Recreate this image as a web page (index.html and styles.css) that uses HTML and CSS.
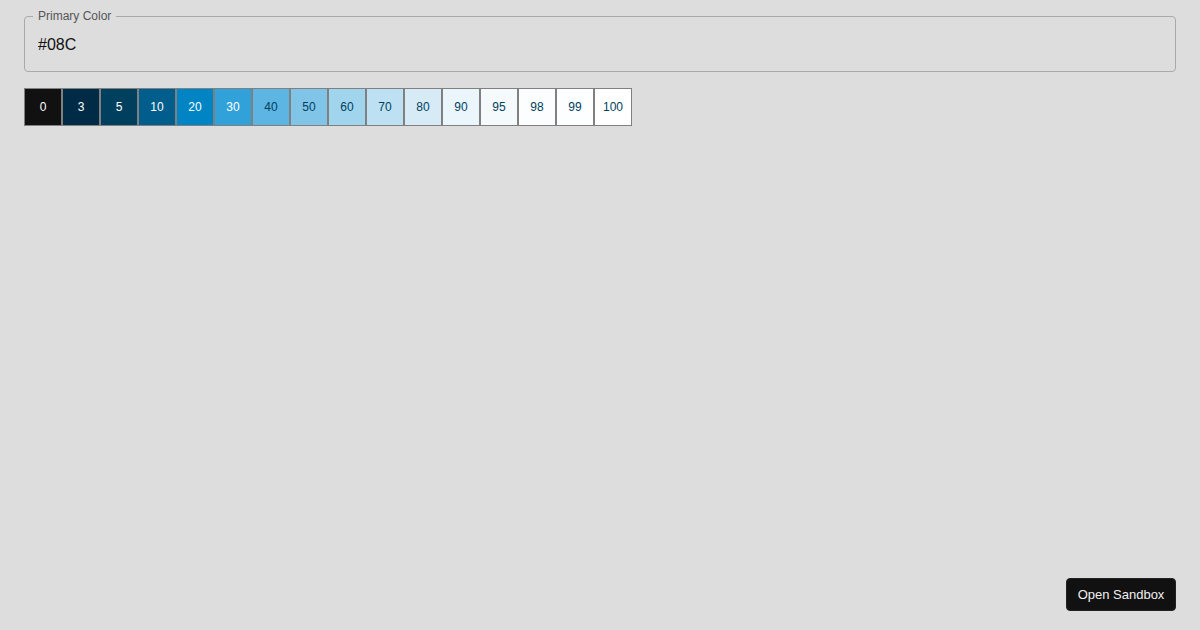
FILE: index.html
```html
<!DOCTYPE html>
<html lang="en">
<head>
    <meta charset="UTF-8">
    <meta name="viewport" content="width=device-width, initial-scale=1.0">
    <title>Palette</title>
    <link rel="stylesheet" href="styles.css">
</head>
<body>
    <div class="page">
        <fieldset class="field">
            <legend>Primary Color</legend>
            <input class="field-input" type="text" value="#08C">
        </fieldset>

        <div class="tones">
            <div class="tone light" style="background-color: #111111">0</div>
            <div class="tone light" style="background-color: #002b47">3</div>
            <div class="tone light" style="background-color: #00405f">5</div>
            <div class="tone light" style="background-color: #005d8c">10</div>
            <div class="tone light" style="background-color: #0084c3">20</div>
            <div class="tone light" style="background-color: #31a1da">30</div>
            <div class="tone" style="background-color: #5cb5e2">40</div>
            <div class="tone" style="background-color: #80c5e8">50</div>
            <div class="tone" style="background-color: #a1d5ee">60</div>
            <div class="tone" style="background-color: #bde0f3">70</div>
            <div class="tone" style="background-color: #d6ebf6">80</div>
            <div class="tone" style="background-color: #ebf6fc">90</div>
            <div class="tone" style="background-color: #f5fafd">95</div>
            <div class="tone" style="background-color: #fbfdfe">98</div>
            <div class="tone" style="background-color: #fdfeff">99</div>
            <div class="tone" style="background-color: #ffffff">100</div>
        </div>
    </div>

    <button class="sandbox-btn">Open Sandbox</button>
</body>
</html>
```

FILE: styles.css
```css
/* Pagina */
body {
    margin: 0;
    background-color: #dddddd;
    font-family: "Liberation Sans", Arial, sans-serif;
    color: #111111;
}

.page {
    padding: 9px 24px 0;
}

/* Campo colore */
.field {
    margin: 0;
    padding: 0 13px 17px;
    border: 1px solid #a9a9a9;
    border-radius: 4px;
}

.field legend {
    margin-left: -5px;
    padding: 0 5px;
    font-size: 12px;
    color: #555555;
    line-height: 14px;
}

.field-input {
    display: block;
    width: 100%;
    height: 18px;
    margin: 13px 0 0;
    padding: 0;
    border: none;
    background: transparent;
    font-family: inherit;
    font-size: 16px;
    line-height: 18px;
    color: #111111;
    outline: none;
}

/* Tonalita */
.tones {
    display: flex;
    margin-top: 16px;
}

.tone {
    width: 36px;
    height: 36px;
    border: 1px solid #808080;
    display: flex;
    align-items: center;
    justify-content: center;
    font-size: 12px;
    color: #00405f;
}

.tone.light {
    color: #ffffff;
}

/* Bottone sandbox */
.sandbox-btn {
    position: fixed;
    right: 24px;
    bottom: 19px;
    width: 110px;
    height: 33px;
    padding: 0;
    border: 1px solid #222222;
    border-radius: 4px;
    background-color: #111111;
    color: #f0f0f0;
    font-family: "Liberation Sans", Arial, sans-serif;
    font-size: 13px;
    cursor: pointer;
}
```
